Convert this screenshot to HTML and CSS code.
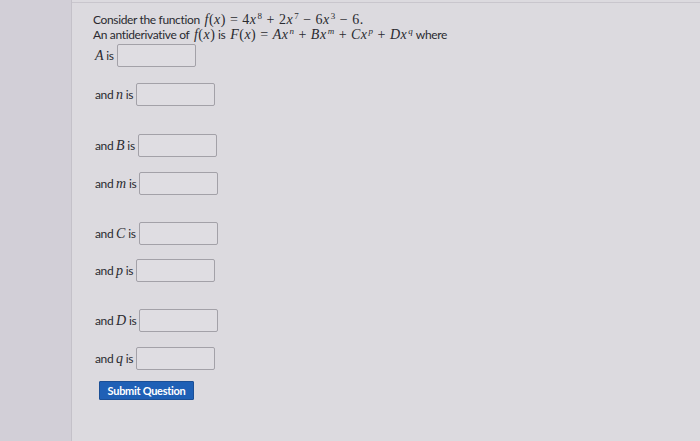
FILE: index.html
```html
<!DOCTYPE html>
<html>
<head>
<meta charset="utf-8">
<link rel="stylesheet" href="styles.css">
</head>
<body>
<div class="page">
  <aside class="side"></aside>
  <main class="main">
    <div class="topline"></div>
    <p class="line">Consider the function <span class="m"><i>f</i>(<i>x</i>)<span class="op">=</span>4<i>x</i><sup>8</sup><span class="op">+</span>2<i>x</i><sup>7</sup><span class="op">−</span>6<i>x</i><sup>3</sup><span class="op">−</span>6.</span></p>
    <p class="line">An antiderivative of <span class="m"><i>f</i>(<i>x</i>)</span> is <span class="m"><i>F</i>(<i>x</i>)<span class="op">=</span><i>Ax</i><sup><i>n</i></sup><span class="op">+</span><i>Bx</i><sup><i>m</i></sup><span class="op">+</span><i>Cx</i><sup><i>p</i></sup><span class="op">+</span><i>Dx</i><sup><i>q</i></sup></span> where</p>
    <div class="row g2"><span class="lbl"><i class="v">A</i> is</span><span class="box"></span></div>
    <div class="row g16"><span class="lbl">and <i class="v">n</i> is</span><span class="box"></span></div>
    <div class="row g28"><span class="lbl">and <i class="v">B</i> is</span><span class="box"></span></div>
    <div class="row g15"><span class="lbl">and <i class="v">m</i> is</span><span class="box"></span></div>
    <div class="row g27"><span class="lbl">and <i class="v">C</i> is</span><span class="box"></span></div>
    <div class="row g14"><span class="lbl">and <i class="v">p</i> is</span><span class="box"></span></div>
    <div class="row g27"><span class="lbl">and <i class="v">D</i> is</span><span class="box"></span></div>
    <div class="row g15"><span class="lbl">and <i class="v">q</i> is</span><span class="box"></span></div>
    <button class="submit">Submit Question</button>
  </main>
</div>
</body>
</html>
```

FILE: styles.css
```css
html, body {
  margin: 0;
  padding: 0;
}
body {
  width: 700px;
  height: 441px;
  overflow: hidden;
  background: #dcdadf;
  font-family: "Lato", "Liberation Sans", sans-serif;
  color: #2a2a30;
}
.page {
  display: flex;
  height: 441px;
}
.side {
  width: 71px;
  flex: none;
  background: #d2cfd7;
  border-right: 1px solid #c4c1c9;
}
.main {
  flex: 1;
  position: relative;
  padding: 12px 0 0 21px;
}
.topline {
  position: absolute;
  left: 0;
  right: 0;
  top: 2px;
  height: 1px;
  background: #c9c6cd;
}
.line {
  margin: 0;
  font-size: 12px;
  line-height: 15px;
  letter-spacing: -0.35px;
  white-space: nowrap;
}
.m {
  font-family: "Liberation Serif", "DejaVu Serif", serif;
  font-size: 14px;
  letter-spacing: 0.5px;
  margin-left: 2px;
}
.m i, .v {
  font-family: "Liberation Serif", "DejaVu Serif", serif;
  font-style: italic;
}
.op {
  margin: 0 4px;
}
sup {
  font-size: 9px;
  vertical-align: 5px;
  line-height: 0;
  margin-left: 1px;
}
.row {
  display: flex;
  align-items: center;
  gap: 3px;
  height: 23px;
}
.g2 { margin-top: 2px; }
.g14 { margin-top: 14px; }
.g15 { margin-top: 15px; }
.g16 { margin-top: 16px; }
.g27 { margin-top: 27px; }
.g28 { margin-top: 28px; }
.lbl {
  font-size: 12px;
  letter-spacing: -0.35px;
  padding-left: 2px;
}
.v {
  font-size: 14px;
  letter-spacing: 0;
}
.box {
  width: 77px;
  height: 21px;
  border: 1px solid #a3a1a8;
  border-radius: 2px;
  background: #dfdde2;
}
.submit {
  display: block;
  margin: 11px 0 0 6px;
  width: 95px;
  height: 19px;
  padding: 0;
  border: 1px solid #1b4f96;
  border-radius: 1px;
  background: #1f60b6;
  color: #fff;
  font-family: "Lato", "Liberation Sans", sans-serif;
  font-weight: bold;
  font-size: 11px;
  letter-spacing: -0.3px;
}
```
